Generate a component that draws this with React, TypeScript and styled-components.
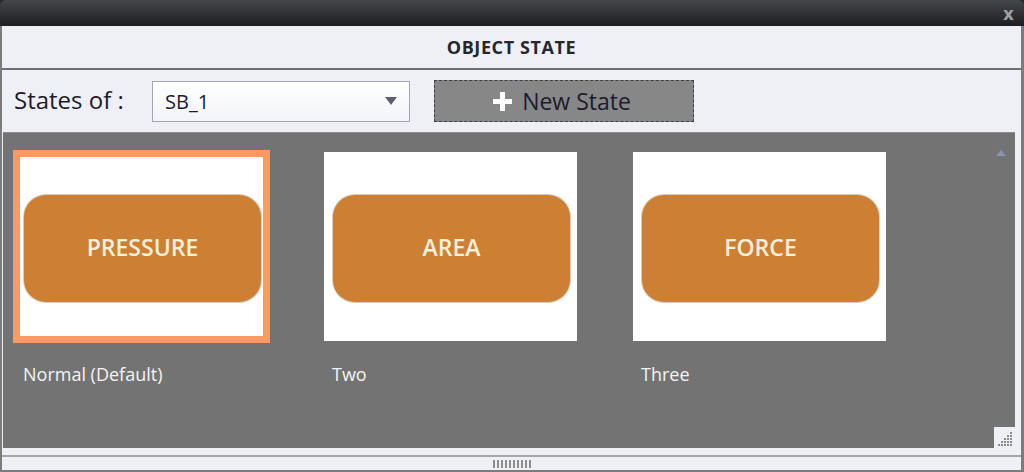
import React from "react";
import styled, { createGlobalStyle, css } from "styled-components";

const color = {
  chromeTop: "#45464b",
  chromeBottom: "#1d1e21",
  panel: "#eef0f5",
  border: "#7c7c7c",
  line: "#6f6f6f",
  canvas: "#737373",
  orange: "#cd8034",
  selection: "#ff9a66",
  ink: "#1c1c2e",
};

const font = `"Open Sans", "Noto Sans", "DejaVu Sans", sans-serif`;

const GlobalStyle = createGlobalStyle`
  html, body {
    margin: 0;
    padding: 0;
    background: #2a2b2f;
    font-family: ${font};
  }
  #root {
    height: 472px;
  }
`;

const Window = styled.div`
  display: flex;
  flex-direction: column;
  height: 472px;
  width: 1024px;
  overflow: hidden;
`;

const TitleBar = styled.div`
  height: 26px;
  flex: none;
  display: flex;
  align-items: center;
  justify-content: flex-end;
  padding-right: 10px;
  background: linear-gradient(${color.chromeTop}, ${color.chromeBottom});
  border-radius: 6px 6px 0 0;
`;

const Close = styled.span`
  color: #a0a0a0;
  font: bold 17px "DejaVu Sans", sans-serif;
  line-height: 1;
  margin-top: 2px;
`;

const Panel = styled.div`
  flex: 1;
  display: flex;
  flex-direction: column;
  background: ${color.panel};
  border-left: 2px solid ${color.border};
  border-right: 3px solid ${color.border};
  border-bottom: 2px solid ${color.border};
  min-height: 0;
`;

const Header = styled.div`
  height: 42px;
  flex: none;
  display: flex;
  align-items: center;
  justify-content: center;
  border-bottom: 2px solid ${color.line};
  font-weight: 700;
  font-size: 18px;
  letter-spacing: 0.6px;
  color: #26262e;
`;

const Toolbar = styled.div`
  height: 62px;
  flex: none;
  display: flex;
  align-items: center;
  padding-left: 12px;
`;

const Label = styled.span`
  font-size: 24px;
  color: ${color.ink};
  width: 138px;
  margin-top: -4px;
`;

const Select = styled.div`
  width: 258px;
  height: 41px;
  box-sizing: border-box;
  display: flex;
  align-items: center;
  padding: 0 10px 0 12px;
  border: 1px solid #a3a6b8;
  background: linear-gradient(#ffffff, #f3f4f8);
  font-size: 20px;
  color: ${color.ink};
`;

const SelectValue = styled.span`
  flex: 1;
`;

const SelectArrow = styled.span`
  width: 0;
  height: 0;
  border-left: 6px solid transparent;
  border-right: 6px solid transparent;
  border-top: 8px solid #5b6070;
  margin-right: 2px;
`;

const NewStateButton = styled.div`
  margin-left: 24px;
  width: 260px;
  height: 42px;
  box-sizing: border-box;
  display: flex;
  align-items: center;
  justify-content: center;
  gap: 10px;
  background: #878787;
  border: 1px dashed #3f3f3f;
  font-size: 23px;
  color: ${color.ink};
  padding-right: 4px;
`;

const Canvas = styled.div`
  flex: 1;
  position: relative;
  background: ${color.canvas};
  margin: 0 6px 0 1px;
  border-top: 1px solid #8c8c8c;
  display: grid;
  grid-template-columns: repeat(3, 253px);
  column-gap: 56px;
  align-content: start;
  padding: 19px 0 0 12px;
`;

const StateItem = styled.div`
  display: flex;
  flex-direction: column;
`;

const Thumb = styled.div<{ selected?: boolean }>`
  height: 189px;
  background: #ffffff;
  box-sizing: border-box;
  padding: 43px 7px 0 9px;
  ${(p) =>
    p.selected &&
    css`
      box-shadow: 0 0 0 2px ${color.selection}, inset 0 0 0 5px ${color.selection};
    `}
`;

const ThumbButton = styled.div`
  height: 107px;
  border-radius: 22px;
  background: ${color.orange};
  box-shadow: 0 0 0 1px rgba(150, 110, 70, 0.35);
  display: flex;
  align-items: center;
  justify-content: center;
  font-size: 23px;
  font-weight: 600;
  color: #fbf0dc;
  padding-bottom: 4px;
  box-sizing: border-box;
`;

const Caption = styled.div`
  margin-top: 21px;
  padding-left: 8px;
  font-size: 18px;
  color: #f4f4f4;
`;

const ScrollUp = styled.span`
  position: absolute;
  right: 9px;
  top: 17px;
  width: 0;
  height: 0;
  border-left: 5px solid transparent;
  border-right: 5px solid transparent;
  border-bottom: 6px solid #8a93b3;
`;

const Grip = styled.div`
  position: absolute;
  right: 0;
  bottom: 0;
  width: 21px;
  height: 21px;
  background: ${color.panel};
  display: flex;
  align-items: flex-end;
  justify-content: flex-end;
`;

const Gap = styled.div`
  height: 7px;
  flex: none;
  border-bottom: 2px solid #a6a6a6;
`;

const Footer = styled.div`
  height: 13px;
  flex: none;
  display: flex;
  align-items: center;
  justify-content: center;
`;

const FooterGrip = styled.div`
  width: 38px;
  height: 8px;
  background: repeating-linear-gradient(90deg, #8e8e8e 0 2px, transparent 2px 4px);
`;

const states = [
  { name: "PRESSURE", label: "Normal (Default)", selected: true },
  { name: "AREA", label: "Two" },
  { name: "FORCE", label: "Three" },
];

function PlusIcon() {
  return (
    <svg width="19" height="19" viewBox="0 0 19 19">
      <rect x="7" y="0" width="5" height="19" fill="#fff" />
      <rect x="0" y="7" width="19" height="5" fill="#fff" />
    </svg>
  );
}

function GripDots() {
  const dots: React.ReactNode[] = [];
  for (let r = 0; r < 5; r++) {
    for (let c = 0; c < 5; c++) {
      if (c + r >= 4) {
        dots.push(
          <rect key={`${r}-${c}`} x={c * 3} y={r * 3} width="2" height="2" fill="#8a8a8a" />
        );
      }
    }
  }
  return (
    <svg width="15" height="15" viewBox="0 0 15 15" style={{ marginRight: 2, marginBottom: 1 }}>
      {dots}
    </svg>
  );
}

export default function App() {
  return (
    <>
      <GlobalStyle />
      <Window>
        <TitleBar>
          <Close>x</Close>
        </TitleBar>
        <Panel>
          <Header>OBJECT STATE</Header>
          <Toolbar>
            <Label>States of :</Label>
            <Select>
              <SelectValue>SB_1</SelectValue>
              <SelectArrow />
            </Select>
            <NewStateButton>
              <PlusIcon />
              New State
            </NewStateButton>
          </Toolbar>
          <Canvas>
            {states.map((s) => (
              <StateItem key={s.name}>
                <Thumb selected={s.selected}>
                  <ThumbButton>{s.name}</ThumbButton>
                </Thumb>
                <Caption>{s.label}</Caption>
              </StateItem>
            ))}
            <ScrollUp />
            <Grip>
              <GripDots />
            </Grip>
          </Canvas>
          <Gap />
          <Footer>
            <FooterGrip />
          </Footer>
        </Panel>
      </Window>
    </>
  );
}
